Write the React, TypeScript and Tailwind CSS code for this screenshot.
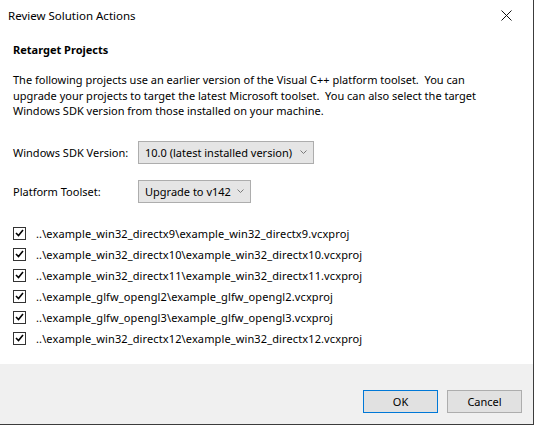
import { useState } from "react";

const PROJECTS = [
  "..\\example_win32_directx9\\example_win32_directx9.vcxproj",
  "..\\example_win32_directx10\\example_win32_directx10.vcxproj",
  "..\\example_win32_directx11\\example_win32_directx11.vcxproj",
  "..\\example_glfw_opengl2\\example_glfw_opengl2.vcxproj",
  "..\\example_glfw_opengl3\\example_glfw_opengl3.vcxproj",
  "..\\example_win32_directx12\\example_win32_directx12.vcxproj",
];

function Chevron() {
  return (
    <svg width="7" height="4" viewBox="0 0 7 4" className="ml-auto shrink-0">
      <path d="M0.5 0.5 L3.5 3.5 L6.5 0.5" fill="none" stroke="#7a7a7a" strokeWidth="1" />
    </svg>
  );
}

function Combo({ value, width }: { value: string; width: string }) {
  return (
    <div
      className={`flex h-[23px] items-center whitespace-nowrap border border-[#adadad] bg-[#e5e5e5] pl-[6px] pr-[6px] ${width}`}
    >
      <span>{value}</span>
      <Chevron />
    </div>
  );
}

function CheckBox({ checked, onToggle }: { checked: boolean; onToggle: () => void }) {
  return (
    <button
      onClick={onToggle}
      className="flex h-[13px] w-[13px] shrink-0 items-center justify-center border border-[#333] bg-white"
    >
      {checked && (
        <svg width="9" height="8" viewBox="0 0 9 8">
          <path d="M1 4 L3.5 6.5 L8 1" fill="none" stroke="#000" strokeWidth="1.6" />
        </svg>
      )}
    </button>
  );
}

export default function App() {
  const [checked, setChecked] = useState(PROJECTS.map(() => true));

  return (
    <div
      className="h-[426px] w-[535px] bg-white text-[11px] leading-[15px] text-black"
      style={{ fontFamily: '"Noto Sans", "Open Sans", sans-serif' }}
    >
      <div className="flex h-[425px] w-[534px] flex-col border-r border-b border-[#3c3c3c]">
        {/* Title bar */}
        <div className="flex h-[30px] items-center pl-[8px] pr-[21px] text-[11.5px]">
          <span>Review Solution Actions</span>
          <svg width="11" height="11" viewBox="0 0 11 11" className="ml-auto">
            <path d="M0.5 0.5 L10.5 10.5 M10.5 0.5 L0.5 10.5" stroke="#111" strokeWidth="1" />
          </svg>
        </div>

        {/* Body */}
        <div className="flex flex-1 flex-col px-[13px]">
          <div className="mt-[12px] font-bold">Retarget Projects</div>

          <p className="mt-[15px] whitespace-nowrap leading-[15.5px]">
            The following projects use an earlier version of the Visual C++ platform toolset.&nbsp; You can
            <br />
            upgrade your projects to target the latest Microsoft toolset.&nbsp; You can also select the target
            <br />
            Windows SDK version from those installed on your machine.
          </p>

          <div className="mt-[22px] flex items-center whitespace-nowrap">
            <span className="w-[125px]">Windows SDK Version:</span>
            <Combo value="10.0 (latest installed version)" width="w-[176px]" />
          </div>

          <div className="mt-[16px] flex items-center whitespace-nowrap">
            <span className="w-[125px]">Platform Toolset:</span>
            <Combo value="Upgrade to v142" width="w-[113px]" />
          </div>

          <div className="mt-[24px] flex flex-col gap-[8px]">
            {PROJECTS.map((p, i) => (
              <label key={p} className="flex h-[13px] items-center gap-[10px] whitespace-nowrap">
                <CheckBox
                  checked={checked[i]}
                  onToggle={() => setChecked(checked.map((c, j) => (j === i ? !c : c)))}
                />
                <span className="tracking-[0.12px]">{p}</span>
              </label>
            ))}
          </div>
        </div>

        {/* Footer */}
        <div className="flex h-[60px] items-start justify-end gap-[9px] bg-[#f0f0f0] pt-[26px] pr-[11px]">
          <button className="h-[23px] w-[75px] border border-[#0078d7] bg-[#e1e1e1]">OK</button>
          <button className="h-[23px] w-[75px] border border-[#adadad] bg-[#e1e1e1]">Cancel</button>
        </div>
      </div>
    </div>
  );
}
